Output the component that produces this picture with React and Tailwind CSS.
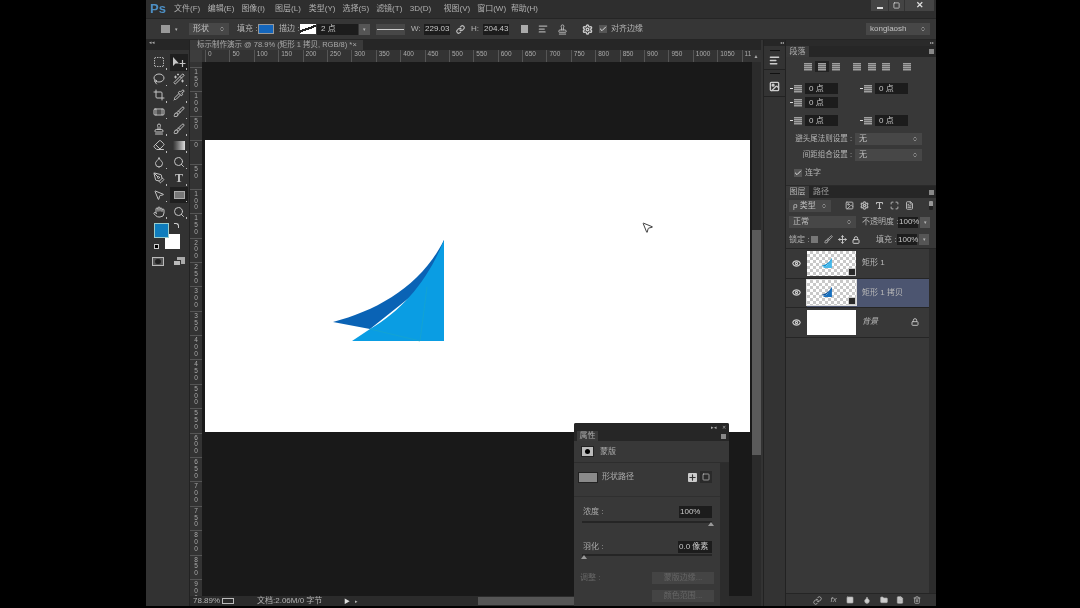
import { AlignLeft, AlignCenter, AlignRight, Bandage, Brush, Crop, Droplet, Eraser, Eye, FileText, Folder, Hand, Link, Lock, Move, Pipette, Search, Settings, Square, SquareDashed, Stamp, Trash2, Type, Wand2, Lasso, PenTool, MousePointer2, Image, Check, ChevronsUpDown, Maximize, Plus } from 'lucide-react';

const menus = ['文件(F)', '编辑(E)', '图像(I)', '图层(L)', '类型(Y)', '选择(S)', '滤镜(T)', '3D(D)', '视图(V)', '窗口(W)', '帮助(H)'];

const hMarks = Array.from({ length: 23 }, (_, i) => (i === 22 ? '11' : String(i * 50)));
const vMarks = Array.from({ length: 22 }, (_, i) => String(Math.abs(i - 3) * 50));

// draws the move tool: arrow plus cross
const MoveTool = ({ className }) => (
  <svg viewBox="0 0 14 12" className={className} width="14" height="12">
    <path d="M1 1L1 10L3.5 7.5L7 7.5Z" fill="currentColor" />
    <path d="M10.5 4V11M7.5 7.5H13.5" stroke="currentColor" strokeWidth="1.2" fill="none" />
  </svg>
);

const tools = [
  [SquareDashed, MoveTool], [Lasso, Wand2], [Crop, Pipette], [Bandage, Brush], [Stamp, Brush],
  [Eraser, 'gradient'], [Droplet, Search], [PenTool, 'type'], [MousePointer2, 'shape'], [Hand, Search],
];

const Tool = ({ icon: Icon, active }) => (
  <div className={`relative flex h-[16.6px] w-[18px] items-center justify-center ${active ? 'bg-[#1f1f1f]' : ''}`}>
    {Icon === 'gradient' && <div className="h-[9px] w-[12px] bg-gradient-to-r from-[#333] to-[#ddd]" />}
    {Icon === 'shape' && <div className="h-[8px] w-[11px] border border-[#aaa] bg-[#777]" />}
    {Icon === 'type' && <span className="font-['Liberation_Serif',serif] text-[12px] font-bold text-[#c4c4c4]">T</span>}
    {typeof Icon !== 'string' && <Icon size={12} strokeWidth={2} className="text-[#c4c4c4]" />}
    <div className="absolute bottom-[1px] right-[1px] h-[1.5px] w-[1.5px] bg-[#bbb]" />
  </div>
);

const Field = ({ children, className = '' }) => (
  <div className={`flex h-[11px] items-center whitespace-nowrap bg-[#1c1c1c] px-1 text-[#c8c8c8] ${className}`}>{children}</div>
);

const Select = ({ children, className = '' }) => (
  <div className={`flex h-[12px] items-center justify-between bg-[#474747] px-1 text-[#c0c0c0] ${className}`}>
    <span>{children}</span>
    <ChevronsUpDown size={6} className="text-[#ccc]" />
  </div>
);

const Sail = ({ className, dark = '#0a63b5', light = '#0a9de3', lines }) => (
  <svg viewBox="0 0 112 102" className={className}>
    <path d="M0 82C45 70 88 46 111 0L111 30L37 89Z" fill={dark} />
    <path d="M19 101L37 89C70 70 95 40 111 0L111 101Z" fill={light} />
    {lines && <path d="M94 47L87 101M37 89L87 101" stroke="#1aa6c8" strokeWidth="0.6" fill="none" />}
  </svg>
);

const Row = ({ selected, name, italic, thumb, lock }) => (
  <div className="flex h-[29.6px] items-center border-b border-[#252525] text-[8px] text-[#b8b8b8]">
    <div className="flex w-[21px] items-center justify-center self-stretch">
      <Eye size={9} strokeWidth={3} className="text-[#ccc]" />
    </div>
    <div className={`flex flex-1 items-center self-stretch ${selected ? 'bg-[#4c5570]' : ''}`}>
      <div className={`relative h-[25px] w-[49px] ${thumb ? 'bg-[repeating-conic-gradient(#c9c9c9_0_25%,#fff_0_50%)] bg-[length:6px_6px]' : 'bg-white'} ${selected ? 'outline outline-1 outline-[#ddd]' : ''}`}>
        {thumb && <Sail className="absolute left-[14px] top-[7px] w-[11px]" dark={selected ? '#0a4f96' : '#0a8fd0'} light={selected ? '#1770bf' : '#46b8ea'} />}
        {thumb && <div className="absolute bottom-0 right-0 h-[8px] w-[8px] border border-[#ccc] bg-[#2a2a2a]" />}
      </div>
      <span className={`ml-[6px] flex-1 ${italic ? 'italic' : ''}`}>{name}</span>
      {lock && <Lock size={8} strokeWidth={3} className="mr-[10px] text-[#bbb]" />}
    </div>
  </div>
);

const StripeBlock = () => (
  <div className="h-[8px] w-[8px] bg-[repeating-linear-gradient(#a0a0a0_0_1px,#6a6a6a_1px_2px)]" />
);

const ParaIndent = ({ children }) => (
  <div className="flex items-center">
    <div className="flex w-[19px] items-center justify-center gap-[1px]">
      <div className="h-[1px] w-[3px] bg-[#ddd]" />
      <StripeBlock />
    </div>
    <Field className="w-[33px]">{children}</Field>
  </div>
);

const App = () => {
  return (
    <div className="flex h-[608px] w-[1080px] overflow-hidden bg-black font-['Liberation_Sans','Noto_Sans_CJK_SC',sans-serif] text-[8px] leading-none">
      <div className="w-[146px] shrink-0" />
      <div className="flex h-[606px] w-[790px] shrink-0 flex-col bg-[#333] blur-[0.4px]">
        {/* menu */}
        <div className="flex h-[18px] items-start bg-[#2e2e2e]">
          <span className="ml-[4px] mt-[2px] w-[24px] text-[13px] font-bold text-[#4d8fc4]">Ps</span>
          <div className="mt-[5px] flex whitespace-nowrap text-[#b0b0b0]">
            {menus.map((m) => <span key={m} className="w-[33.7px]">{m}</span>)}
          </div>
          <div className="ml-auto mr-[2px] flex h-[11px] bg-[#444] text-[#ddd]">
            <div className="flex w-[17px] items-end justify-center pb-[2px]"><div className="h-[2px] w-[6px] bg-[#ddd]" /></div>
            <div className="flex w-[17px] items-center justify-center border-x border-[#333]"><Square size={7} strokeWidth={2.5} /></div>
            <div className="flex w-[29px] items-center justify-center text-[9px] font-bold">✕</div>
          </div>
        </div>

        {/* options */}
        <div className="flex h-[22px] items-center border-y border-[#252525] bg-[#363636] text-[#b4b4b4]">
          <div className="ml-[15px] h-[8px] w-[9px] bg-[#999]" />
          <span className="ml-[5px] w-[10px] text-[5px]">▾</span>
          <Select className="ml-[4px] w-[40px]">形状</Select>
          <span className="ml-[8px] w-[21px]">填充 :</span>
          <div className="h-[10px] w-[16px] border border-[#999] bg-[#1466bc]" />
          <span className="ml-[5px] w-[21px]">描边 :</span>
          <div className="h-[10px] w-[16px] bg-[linear-gradient(160deg,#fff_40%,#222_40%,#222_55%,#fff_55%)]" />
          <Field className="ml-[1px] w-[41px]">2 点</Field>
          <div className="ml-[1px] flex h-[11px] w-[11px] items-center justify-center bg-[#555] text-[5px]">▾</div>
          <div className="ml-[6px] flex h-[11px] w-[29px] items-center bg-[#474747] px-[1px]"><div className="h-[1px] w-full bg-[#ccc]" /></div>
          <span className="ml-[6px] w-[13px]">W:</span>
          <Field className="w-[26px] !px-[1px]">229.03</Field>
          <Link size={9} strokeWidth={3} className="ml-[6px] text-[#bbb]" />
          <span className="ml-[6px] w-[12px]">H:</span>
          <Field className="w-[26px] !px-[1px]">204.43</Field>
          <div className="ml-[12px] h-[8px] w-[7px] bg-[#aaa]" />
          <AlignLeft size={10} strokeWidth={3} className="ml-[10px] text-[#aaa]" />
          <Stamp size={11} className="ml-[9px] text-[#bbb]" />
          <Settings size={11} strokeWidth={3} className="ml-[14px] text-[#ccc]" />
          <div className="ml-[6px] flex h-[8px] w-[8px] items-center justify-center bg-[#555]"><Check size={8} strokeWidth={3} className="text-[#ddd]" /></div>
          <span className="ml-[4px]">对齐边缘</span>
          <Select className="ml-auto mr-[6px] w-[64px]">konglaosh</Select>
        </div>

        {/* body */}
        <div className="relative flex min-h-0 flex-1">
          {/* tools */}
          <div className="w-[44px] shrink-0 border-r border-[#222] bg-[#323232]">
            <div className="h-[10px] bg-[#262626] pl-[3px] text-[5px] text-[#aaa]">◂◂</div>
            <div className="flex flex-col pl-[3px] pt-[4px]">
              {tools.map(([a, b], i) => (
                <div key={i} className="flex gap-[2px] pl-[1px]">
                  <Tool icon={a} />
                  <Tool icon={b} active={i === 0 || i === 8} />
                </div>
              ))}
            </div>
            <div className="relative ml-[8px] mt-[3px] h-[26px] w-[26px]">
              <div className="absolute bottom-0 right-0 h-[15px] w-[15px] bg-white" />
              <div className="absolute left-0 top-0 h-[15px] w-[15px] border border-[#9cc] bg-[#0f7dbd]" />
              <div className="absolute right-[1px] top-0 h-[5px] w-[5px] rounded-tr-[3px] border-r border-t border-[#ccc]" />
              <div className="absolute bottom-0 left-0 h-[5px] w-[5px] border border-[#ccc] bg-black" />
            </div>
            <div className="ml-[6px] mt-[8px] flex items-center gap-[9px]">
              <div className="flex h-[9px] w-[12px] items-center justify-center border border-[#bbb] bg-[#555]"><div className="h-[5px] w-[6px] rounded-full bg-[#222]" /></div>
              <div className="relative h-[9px] w-[12px]">
                <div className="absolute right-0 top-0 h-[7px] w-[8px] bg-[#aaa]" />
                <div className="absolute bottom-0 left-0 h-[6px] w-[8px] border border-[#333] bg-[#bbb]" />
              </div>
            </div>
          </div>

          {/* canvas column */}
          <div className="flex w-[571px] shrink-0 flex-col">
            <div className="flex h-[10px] items-end bg-[#262626]">
              <div className="flex h-[10px] w-[173px] items-center justify-between whitespace-nowrap bg-[#3a3a3a] pl-[7px] pr-[6px] text-[7.5px] text-[#a8a8a8]">
                <span>标示制作演示 @ 78.9% (矩形 1 拷贝, RGB/8) *</span>
                <span>×</span>
              </div>
            </div>
            <div className="flex h-[12px] bg-[#333] text-[6.5px] text-[#aaa]">
              <div className="h-full w-[12px] shrink-0 bg-[#3d3d3d]" />
              <div className="flex w-[549px] overflow-hidden pl-[3px]">
                {hMarks.map((m) => (
                  <div key={m} className="h-full w-[24.4px] shrink-0 border-l border-[#555] pl-[2px] pt-[1px]">{m}</div>
                ))}
              </div>
              <div className="flex flex-1 items-center justify-center text-[5px]">▲</div>
            </div>
            <div className="flex min-h-0 flex-1">
              <div className="h-full w-[12px] shrink-0 overflow-hidden bg-[#333] pt-[4.8px] text-[6.5px] text-[#aaa]">
                {vMarks.map((m, i) => (
                  <div key={i} className="flex h-[24.4px] flex-col items-center border-t border-[#555] pt-[1px] leading-[6.8px]">
                    {m.split('').map((d, j) => <span key={j}>{d}</span>)}
                  </div>
                ))}
              </div>
              <div className="min-w-0 flex-1 bg-[#191919] pl-[3px] pt-[78px]">
                <div className="relative h-[292px] w-[545px] bg-white pl-[128px] pt-[100px]">
                  <Sail className="h-[102px] w-[112px]" lines />
                  <MousePointer2 size={13} strokeWidth={1.6} className="absolute left-[436px] top-[81px] fill-white text-[#222]" />
                </div>
              </div>
              <div className="w-[9px] shrink-0 bg-[#2b2b2b] pt-[168px]">
                <div className="h-[225px] w-full bg-[#5a5a5a]" />
              </div>
            </div>
            <div className="flex h-[10px] items-center bg-[#2b2b2b] text-[#b4b4b4]">
              <span className="ml-[3px] w-[29px]">78.89%</span>
              <div className="h-[6px] w-[12px] border border-[#bbb]" />
              <span className="ml-[23px] w-[87px]">文档:2.06M/0 字节</span>
              <span className="text-[6px] text-[#ddd]">▶</span>
              <span className="ml-[5px] text-[5px]">▸</span>
              <div className="ml-[120px] h-[8px] w-[150px] bg-[#555]" />
            </div>
          </div>

          {/* dock */}
          <div className="ml-[2px] w-[23px] shrink-0 border-x border-[#222] bg-[#333]">
            <div className="flex h-[6px] items-center justify-end bg-[#262626] pr-[1px] text-[4px] text-[#aaa]">◂◂</div>
            <div className="flex h-[24px] flex-col items-center border-b border-[#222] pt-[4px]">
              <div className="h-[1px] w-[10px] bg-[#111]" />
              <AlignLeft size={11} strokeWidth={3} className="mt-[4px] text-[#ccc]" />
            </div>
            <div className="flex h-[27px] flex-col items-center border-b border-[#222] pt-[3px]">
              <div className="h-[1px] w-[10px] bg-[#111]" />
              <Image size={11} strokeWidth={3} className="mt-[7px] text-[#ccc]" />
            </div>
          </div>

          {/* panels */}
          <div className="flex flex-1 flex-col bg-[#2a2a2a]">
            <div className="flex h-[6px] items-center justify-end pr-[2px] text-[4px] text-[#aaa]">▸▸</div>
            <div className="flex h-[11px] items-center justify-between bg-[#262626] text-[#aaa]">
              <span className="flex h-full w-[23px] items-center justify-center bg-[#3a3a3a]">段落</span>
              <span className="mr-[2px] h-[5px] w-[5px] bg-[#888]" />
            </div>
            <div className="flex h-[128px] flex-col bg-[#383838] text-[#b4b4b4]">
              <div className="mt-[4px] flex items-center pl-[15px]">
                {[0, 1, 2].map((i) => (
                  <div key={i} className={`flex h-[11px] w-[14px] items-center justify-center ${i === 1 ? 'bg-[#222]' : ''}`}><StripeBlock /></div>
                ))}
                <div className="w-[7px]" />
                {[0, 1, 2].map((i) => (
                  <div key={i} className="flex h-[11px] w-[14.5px] items-center justify-center"><StripeBlock /></div>
                ))}
                <div className="w-[9px]" />
                <StripeBlock />
              </div>
              <div className="mt-[11px] flex gap-[18px]"><ParaIndent>0 点</ParaIndent><ParaIndent>0 点</ParaIndent></div>
              <div className="mt-[3px] flex"><ParaIndent>0 点</ParaIndent></div>
              <div className="mt-[7px] flex gap-[18px]"><ParaIndent>0 点</ParaIndent><ParaIndent>0 点</ParaIndent></div>
              <div className="mt-[7px] flex items-center">
                <span className="w-[66px] text-right text-[7.5px]">避头尾法则设置 :</span>
                <Select className="ml-[3px] w-[67px]">无</Select>
              </div>
              <div className="mt-[4px] flex items-center">
                <span className="w-[66px] text-right text-[7.5px]">间距组合设置 :</span>
                <Select className="ml-[3px] w-[67px]">无</Select>
              </div>
              <div className="ml-[8px] mt-[8px] flex items-center gap-[3px]">
                <div className="flex h-[8px] w-[8px] items-center justify-center bg-[#555]"><Check size={8} strokeWidth={3} className="text-[#ddd]" /></div>
                <span>连字</span>
              </div>
            </div>

            <div className="mt-[1px] flex h-[12px] items-center justify-between bg-[#262626] text-[#999]">
              <div className="flex h-full items-center">
                <span className="flex h-full w-[23px] items-center justify-center bg-[#3a3a3a] text-[#b4b4b4]">图层</span>
                <span className="ml-[4px]">路径</span>
              </div>
              <span className="mr-[2px] h-[5px] w-[5px] bg-[#888]" />
            </div>
            <div className="flex flex-1 flex-col bg-[#383838] text-[#b4b4b4]">
              <div className="flex h-[15px] items-center pl-[3px]">
                <Select className="w-[42px]">ρ 类型</Select>
                <Image size={9} strokeWidth={2.5} className="ml-[14px] text-[#bbb]" />
                <Settings size={9} strokeWidth={3} className="ml-[6px] text-[#bbb]" />
                <Type size={9} strokeWidth={3} className="ml-[6px] text-[#bbb]" />
                <Maximize size={9} strokeWidth={2.5} className="ml-[6px] text-[#bbb]" />
                <FileText size={9} strokeWidth={2.5} className="ml-[6px] text-[#bbb]" />
                <div className="ml-[15px] h-[9px] w-[4px] rounded-[1px] bg-[linear-gradient(#999_50%,#222_50%)]" />
              </div>
              <div className="flex h-[18px] items-center pl-[3px]">
                <Select className="w-[67px]">正常</Select>
                <span className="ml-[6px] w-[36px] whitespace-nowrap">不透明度 :</span>
                <Field className="w-[20px] !px-[1px]">100%</Field>
                <div className="ml-[2px] flex h-[11px] w-[10px] items-center justify-center bg-[#555] text-[5px]">▾</div>
              </div>
              <div className="flex h-[18px] items-center border-b border-[#252525] pl-[3px]">
                <span className="w-[22px]">锁定 :</span>
                <div className="h-[7px] w-[7px] bg-[#777]" />
                <Brush size={9} strokeWidth={2.5} className="ml-[6px] text-[#aaa]" />
                <Move size={9} strokeWidth={2.5} className="ml-[5px] text-[#ccc]" />
                <Lock size={8} strokeWidth={3} className="ml-[5px] text-[#ccc]" />
                <span className="ml-[16px] w-[21px]">填充 :</span>
                <Field className="w-[20px] !px-[1px]">100%</Field>
                <div className="ml-[2px] flex h-[11px] w-[10px] items-center justify-center bg-[#555] text-[5px]">▾</div>
              </div>
              <div className="flex min-h-0 flex-1">
                <div className="min-w-0 flex-1">
                  <Row thumb name="矩形 1" />
                  <Row thumb selected name="矩形 1 拷贝" />
                  <Row italic lock name="背景" />
                </div>
                <div className="w-[7px] shrink-0 bg-[#2c2c2c]" />
              </div>
              <div className="flex h-[13px] items-center justify-end border-t border-[#252525] bg-[#333] pr-[11px] text-[#aaa]">
                <span className="flex w-[16.6px] justify-center"><Link size={9} strokeWidth={2.5} /></span>
                <span className="flex w-[16.6px] justify-center italic">fx</span>
                <span className="flex w-[16.6px] justify-center"><Square size={8} fill="#ccc" /></span>
                <span className="flex w-[16.6px] justify-center"><Droplet size={8} fill="#ccc" /></span>
                <span className="flex w-[16.6px] justify-center"><Folder size={8} fill="#ccc" /></span>
                <span className="flex w-[16.6px] justify-center"><FileText size={8} fill="#ccc" /></span>
                <span className="flex w-[16.6px] justify-center"><Trash2 size={8} strokeWidth={2.5} /></span>
              </div>
            </div>
          </div>

          {/* floating properties panel */}
          <div className="absolute left-[428px] top-[383px] flex h-[183px] w-[155px] flex-col overflow-hidden rounded-t-[2px] bg-[#383838] text-[#aaa]">
            <div className="flex h-[8px] items-center justify-end gap-[5px] bg-[#262626] pr-[3px] text-[5px]">
              <span>▸◂</span><span>✕</span>
            </div>
            <div className="flex h-[10px] items-center justify-between bg-[#262626]">
              <span className="ml-[3px] flex h-full w-[21px] items-center justify-center bg-[#3a3a3a]">属性</span>
              <span className="mr-[3px] h-[5px] w-[5px] bg-[#888]" />
            </div>
            <div className="flex h-[22px] items-center border-b border-[#2d2d2d] pl-[7px] pr-[10px]">
              <div className="flex h-[11px] w-[13px] items-center justify-center border border-[#222] bg-[#bbb]"><div className="h-[5px] w-[5px] rounded-full bg-black" /></div>
              <span className="ml-[6px]">蒙版</span>
            </div>
            <div className="flex min-h-0 flex-1">
              <div className="min-w-0 flex-1">
                <div className="flex h-[34px] items-center border-b border-[#2f2f2f] pb-[5px] pl-[4px]">
                  <div className="h-[11px] w-[20px] border border-[#222] bg-[#8a8a8a]" />
                  <span className="ml-[4px]">形状路径</span>
                  <Plus size={9} strokeWidth={3} className="ml-[54px] rounded-[1px] bg-[#ccc] text-[#333]" />
                  <div className="ml-[3px] flex h-[12px] w-[12px] items-center justify-center bg-[#2a2a2a]"><Square size={8} strokeWidth={2} className="text-[#ccc]" /></div>
                </div>
                <div className="mt-[9px] flex items-center pl-[9px]">
                  <span className="w-[96px]">浓度 :</span>
                  <Field className="h-[12px] w-[33px] !px-[1px]">100%</Field>
                </div>
                <div className="ml-[8px] mt-[3px] h-[2px] w-[130px] bg-[#252525]" />
                <div className="ml-[134px] mt-[-1px] h-0 w-0 border-x-[3px] border-b-[4px] border-x-transparent border-b-[#999]" />
                <div className="mt-[15px] flex items-center pl-[9px]">
                  <span className="w-[95px]">羽化 :</span>
                  <Field className="h-[12px] w-[34px] !px-[1px]">0.0 像素</Field>
                </div>
                <div className="ml-[8px] mt-[1px] h-[2px] w-[130px] bg-[#252525]" />
                <div className="ml-[7px] mt-[-1px] h-0 w-0 border-x-[3px] border-b-[4px] border-x-transparent border-b-[#999]" />
                <div className="mt-[13px] flex items-center pl-[6px] text-[#666]">
                  <span className="w-[72px]">调整 :</span>
                  <div className="flex h-[12px] w-[62px] items-center justify-center bg-[#444]">蒙版边缘...</div>
                </div>
                <div className="ml-[78px] mt-[6px] flex h-[12px] w-[62px] items-center justify-center bg-[#444] text-[#666]">颜色范围...</div>
              </div>
              <div className="w-[9px] shrink-0 bg-[#2c2c2c]" />
            </div>
          </div>
        </div>
      </div>
    </div>
  );
};

export default App;
